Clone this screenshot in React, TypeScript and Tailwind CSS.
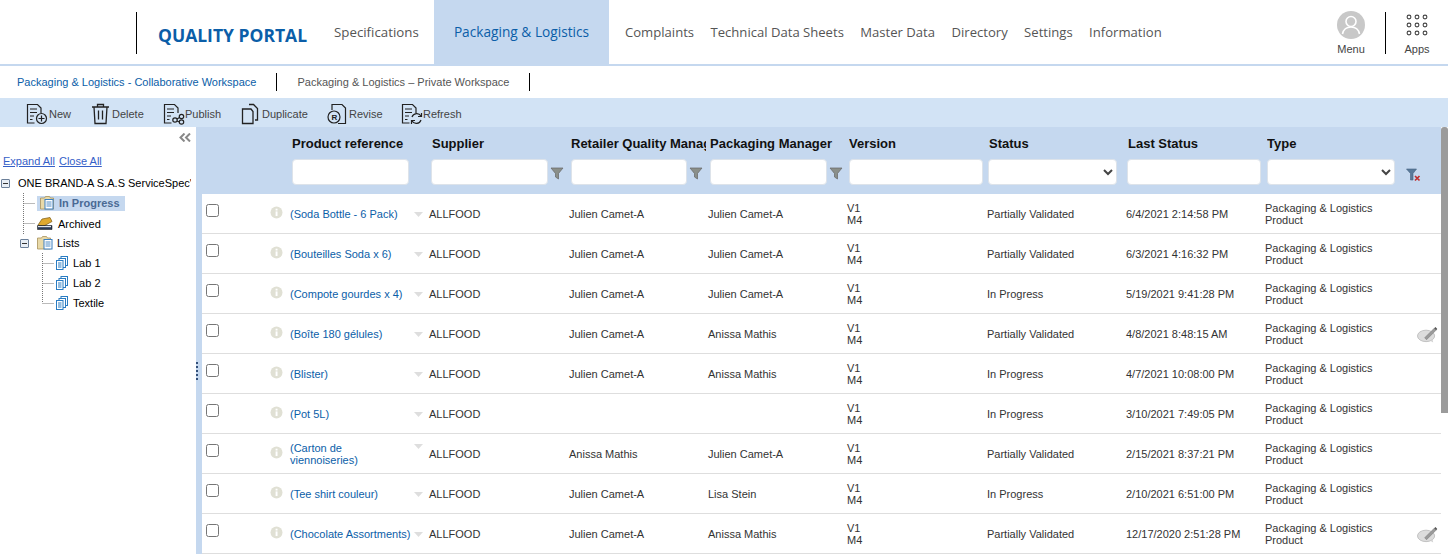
import type { ReactNode } from "react";

const navItems = ["Complaints", "Technical Data Sheets", "Master Data", "Directory", "Settings", "Information"];

const rows = [
  { ref: "(Soda Bottle - 6 Pack)", retailer: "Julien Camet-A", pack: "Julien Camet-A", status: "Partially Validated", date: "6/4/2021 2:14:58 PM" },
  { ref: "(Bouteilles Soda x 6)", retailer: "Julien Camet-A", pack: "Julien Camet-A", status: "Partially Validated", date: "6/3/2021 4:16:32 PM" },
  { ref: "(Compote gourdes x 4)", retailer: "Julien Camet-A", pack: "Julien Camet-A", status: "In Progress", date: "5/19/2021 9:41:28 PM" },
  { ref: "(Boîte 180 gélules)", retailer: "Julien Camet-A", pack: "Anissa Mathis", status: "Partially Validated", date: "4/8/2021 8:48:15 AM", note: true },
  { ref: "(Blister)", retailer: "Julien Camet-A", pack: "Anissa Mathis", status: "In Progress", date: "4/7/2021 10:08:00 PM" },
  { ref: "(Pot 5L)", retailer: "", pack: "", status: "In Progress", date: "3/10/2021 7:49:05 PM" },
  { ref: "(Carton de viennoiseries)", retailer: "Anissa Mathis", pack: "Julien Camet-A", status: "Partially Validated", date: "2/15/2021 8:37:21 PM" },
  { ref: "(Tee shirt couleur)", retailer: "Julien Camet-A", pack: "Lisa Stein", status: "In Progress", date: "2/10/2021 6:51:00 PM" },
  { ref: "(Chocolate Assortments)", retailer: "Julien Camet-A", pack: "Anissa Mathis", status: "Partially Validated", date: "12/17/2020 2:51:28 PM", note: true },
];

function Doc({ children }: { children?: ReactNode }) {
  return (
    <svg width="22" height="22" viewBox="0 0 22 22" fill="none" stroke="#222" strokeWidth="1.2" className="shrink-0">
      <path d="M1.500 17V1.500h10l3.500 3.500V10M1.500 17v3h7" />
      <path d="M4 6h7M4 9.500h7M4 13h4M4 16.500h2.500" />
      {children}
    </svg>
  );
}

function ToolButton({ icon, label, className }: { icon: ReactNode; label: string; className: string }) {
  return (
    <div className={`flex items-center ${className}`}>
      {icon}
      <span className="mt-[1px] text-[11px] text-[#444]">{label}</span>
    </div>
  );
}

function Funnel() {
  return (
    <svg width="14" height="14" viewBox="0 0 14 14" className="shrink-0">
      <path d="M1 2h12L8.500 7.500V13L5.500 11V7.500z" fill="#8a8f8a" stroke="#666" strokeWidth="0.7" />
    </svg>
  );
}

function HeadInput({ width, filter }: { width: string; filter?: boolean }) {
  return (
    <div className="flex items-center">
      <input className={`h-[26px] rounded-[4px] border border-[#dde3ea] bg-white ${width}`} />
      {filter && <span className="ml-[2px] mt-[2px]"><Funnel /></span>}
    </div>
  );
}

function HeadSelect({ width }: { width: string }) {
  return (
    <select className={`h-[26px] rounded-[4px] border border-[#dde3ea] bg-white text-[12px] text-[#444] ${width}`}>
      <option></option>
    </select>
  );
}

function HeadCell({ label, children, labelClass }: { label: string; children: ReactNode; labelClass?: string }) {
  return (
    <div className="min-w-0 pr-[4px]">
      <div className={`h-[32px] overflow-hidden whitespace-nowrap pt-[8px] text-[13px] leading-[17px] font-bold text-[#111] ${labelClass ?? ""}`}>{label}</div>
      {children}
    </div>
  );
}

function InfoIcon() {
  return (
    <svg width="13" height="13" viewBox="0 0 13 13" className="mb-[2px] shrink-0">
      <circle cx="6.500" cy="6.500" r="6" fill="#e0e0d4" />
      <rect x="5.600" y="5.400" width="1.900" height="4.600" fill="#fff" />
      <rect x="5.600" y="2.700" width="1.900" height="1.800" fill="#fff" />
    </svg>
  );
}

function NoteIcon() {
  return (
    <svg width="21" height="20" viewBox="0 0 22 20">
      <ellipse cx="9.500" cy="12" rx="9" ry="6" fill="#dcdcdc" stroke="#b5b5b5" strokeWidth="0.8" />
      <path d="M14 17l3 2-1-4z" fill="#d0d0d0" />
      <path d="M8 14l10-10 2 2-10 10z" fill="#9a9a9a" stroke="#777" strokeWidth="0.5" />
      <path d="M18 4l1.300-1.300 2 2L20 6z" fill="#555" />
    </svg>
  );
}

function StackIcon() {
  return (
    <svg width="12" height="14" viewBox="0 0 12 14" fill="#fff" stroke="#2a7cc2" strokeWidth="1" className="shrink-0">
      <rect x="5" y="0.500" width="6.500" height="9" />
      <rect x="3" y="2.500" width="6.500" height="9" />
      <rect x="0.500" y="4.500" width="6.500" height="9" />
      <path d="M2 7h3.500M2 9h3.500M2 11h3.500" stroke="#2a7cc2" />
    </svg>
  );
}

function FolderIcon({ stack }: { stack?: boolean }) {
  return (
    <svg width="16" height="14" viewBox="0 0 16 14" className="shrink-0">
      <path d="M0.500 2h4l1-1.500h4l1 1.500h3v11h-13z" fill="#e8d9a8" stroke="#a8925a" strokeWidth="0.8" />
      <rect x={stack ? 7 : 5} y="3.500" width="8" height="9.500" fill="#fff" stroke="#3b7fc0" />
      <path d={stack ? "M8.500 6h5M8.500 8h5M8.500 10h5" : "M6.500 6h5M6.500 8h5M6.500 10h5"} stroke="#3b7fc0" strokeWidth="0.9" />
    </svg>
  );
}

function Expander() {
  return (
    <span className="flex h-[9px] w-[9px] shrink-0 items-center justify-center rounded-[1px] border border-[#6b7f99] bg-[#e8eef5]">
      <span className="h-px w-[5px] bg-[#333]" />
    </span>
  );
}

function Branch({ last }: { last?: boolean }) {
  return (
    <svg width="14" height="21" className="shrink-0">
      <path d={`M0.500 0V${last ? 10 : 21}M0.500 10.500H12`} stroke="#777" strokeDasharray="1 1" fill="none" />
    </svg>
  );
}

function Tree() {
  return (
    <div className="text-[11px] leading-[20px] text-black">
      <div className="flex h-[20px] items-center whitespace-nowrap pl-[1px]">
        <Expander />
        <span className="ml-[8px] w-[173px] overflow-hidden">ONE BRAND-A S.A.S ServiceSpec'</span>
      </div>
      <div className="flex h-[20px] items-center overflow-hidden pl-[23px]">
        <Branch />
        <span className="flex h-[15px] w-[88px] items-center bg-[#c5d8ef] pl-[3px] font-bold text-[#4a6a94]">
          <FolderIcon />
          <span className="ml-[3px] leading-none">In Progress</span>
        </span>
      </div>
      <div className="flex h-[21px] items-center pl-[23px]">
        <Branch />
        <svg width="16" height="14" viewBox="0 0 16 14" className="shrink-0">
          <path d="M1 8l4-6 8-1.500 2 4-9 5z" fill="#e0a92f" stroke="#7a5a14" strokeWidth="0.7" />
          <path d="M0.500 8.500h14.500v4H0.500z" fill="#2b3a55" stroke="#111" strokeWidth="0.5" />
          <path d="M1 9h13v1.200H1z" fill="#dfe5ee" />
        </svg>
        <span className="ml-[5px]">Archived</span>
      </div>
      <div className="flex h-[19px] items-center pb-[1px] pl-[20px]">
        <Expander />
        <span className="ml-[8px]"><FolderIcon stack /></span>
        <span className="ml-[4px]">Lists</span>
      </div>
      {["Lab 1", "Lab 2", "Textile"].map((name, i) => (
        <div key={name} className="flex h-[20px] items-center overflow-hidden pl-[42px]">
          <Branch last={i === 2} />
          <StackIcon />
          <span className="ml-[5px]">{name}</span>
        </div>
      ))}
    </div>
  );
}

export default function App() {
  return (
    <div className="h-[554px] w-[1448px] overflow-hidden bg-white font-['Liberation_Sans',Arial,sans-serif]">
      {/* top bar */}
      <header className="flex h-[66px] items-start border-b-2 border-[#c5d8ef] font-['Open_Sans',sans-serif]">
        <div className="ml-[136px] mt-[12px] h-[42px] w-px bg-black" />
        <div className="ml-[21px] mt-[22px] w-[176px] text-[17.500px] leading-[26px] font-bold whitespace-nowrap text-[#0b5ea8]">QUALITY PORTAL</div>
        <div className="mt-[22px] w-[100px] text-[13.300px] leading-[20px] text-[#555]">Specifications</div>
        <div className="flex h-[64px] w-[175px] justify-center bg-[#c5d8ef] pt-[22px] text-[13.700px] leading-[20px] text-[#0b5ea8]">Packaging &amp; Logistics</div>
        <nav className="ml-[16px] mt-[22px] flex gap-[16.400px] text-[13.100px] leading-[20px] whitespace-nowrap text-[#555]">
          {navItems.map((item) => (
            <span key={item}>{item}</span>
          ))}
        </nav>
        <div className="ml-auto flex font-['Liberation_Sans',Arial,sans-serif] text-[11px] text-[#444]">
          <div className="mt-[11px] flex w-[40px] flex-col items-center">
            <svg width="28" height="28" viewBox="0 0 28 28">
              <circle cx="14" cy="14" r="14" fill="#c8c8c8" />
              <circle cx="14" cy="10.500" r="5" fill="none" stroke="#fff" strokeWidth="1.600" />
              <path d="M5.500 23c1-5 4-7 8.500-7s7.500 2 8.500 7" fill="none" stroke="#fff" strokeWidth="1.600" />
            </svg>
            <span className="mt-[3px] leading-[14px]">Menu</span>
          </div>
          <div className="ml-[14px] mt-[12px] h-[42px] w-px bg-black" />
          <div className="ml-[8px] mr-[8px] mt-[14px] flex w-[46px] flex-col items-center">
            <svg width="22" height="22" viewBox="0 0 22 22" fill="none" stroke="#444" strokeWidth="1.100">
              {[3, 11, 19].map((y) =>
                [3, 11, 19].map((x) => <circle key={`${x}-${y}`} cx={x} cy={y} r="1.900" />)
              )}
            </svg>
            <span className="mt-[6px] leading-[14px]">Apps</span>
          </div>
        </div>
      </header>

      {/* workspaces */}
      <div className="flex h-[32px] items-center text-[11px]">
        <span className="ml-[17px] text-[#0b5ea8]">Packaging &amp; Logistics - Collaborative Workspace</span>
        <span className="ml-[20px] h-[18px] w-px bg-black" />
        <span className="ml-[20px] text-[#555]">Packaging &amp; Logistics – Private Workspace</span>
        <span className="ml-[20px] h-[18px] w-px bg-black" />
      </div>

      {/* toolbar */}
      <div className="flex h-[29px] items-center bg-[#d2e3f5] pl-[26px] pt-[2px]">
        <ToolButton
          className="w-[65px] gap-[1px]"
          label="New"
          icon={
            <Doc>
              <circle cx="15.500" cy="15.500" r="5" />
              <path d="M15.500 12.500v6M12.500 15.500h6" />
            </Doc>
          }
        />
        <ToolButton
          className="w-[72px]"
          label="Delete"
          icon={
            <svg width="21" height="22" viewBox="0 0 21 22" fill="none" stroke="#222" strokeWidth="1.300" className="shrink-0">
              <path d="M1 4h17M6.500 4V1.500h6V4M3 4l1 16.500h11L16 4M7.500 7.500v9M11.500 7.500v9" />
            </svg>
          }
        />
        <ToolButton
          className="w-[78px]"
          label="Publish"
          icon={
            <Doc>
              <circle cx="12" cy="17" r="2.200" />
              <circle cx="18.500" cy="13.500" r="2.200" />
              <circle cx="18.500" cy="19" r="2.200" />
              <path d="M14 16l2.500-1.500M14 18l2.500 1" />
            </Doc>
          }
        />
        <ToolButton
          className="w-[86px]"
          label="Duplicate"
          icon={
            <svg width="21" height="22" viewBox="0 0 21 22" fill="none" stroke="#222" strokeWidth="1.300" className="shrink-0">
              <path d="M8 1.500h4.500l4 4V17H14M1.500 6H10l2 2.500V20.500H1.500z" />
            </svg>
          }
        />
        <ToolButton
          className="w-[74px]"
          label="Revise"
          icon={
            <svg width="22" height="22" viewBox="0 0 22 22" fill="none" stroke="#222" strokeWidth="1.200" className="shrink-0">
              <path d="M5 7V1.500h10l3.500 3.500v15.500H11" />
              <circle cx="7" cy="14" r="6" />
              <text x="4.500" y="17" fontSize="8" fontWeight="bold" fill="#222" stroke="none" fontFamily="Liberation Sans">R</text>
            </svg>
          }
        />
        <ToolButton
          className="w-[61px]"
          label="Refresh"
          icon={
            <Doc>
              <path d="M11 14a5 5 0 0 1 9-1M20 17a5 5 0 0 1-9 1" />
              <path d="M20.500 10v3.500H17M10.500 21v-3.500H14" />
            </Doc>
          }
        />
      </div>

      {/* body */}
      <div className="flex h-[427px]">
        <aside className="w-[196px] shrink-0 overflow-hidden">
          <div className="flex h-[15px] items-end justify-end pr-[5px]">
            <svg width="12" height="9" viewBox="0 0 12 9" fill="none" stroke="#888" strokeWidth="2">
              <path d="M5.500 0.500L1.500 4.500l4 4M11 0.500L7 4.500l4 4" />
            </svg>
          </div>
          <div className="mt-[11px] flex gap-[4px] pl-[3px] text-[11px] leading-[16px] text-[#3560c8] underline">
            <span>Expand All</span>
            <span>Close All</span>
          </div>
          <div className="mt-[4px]">
            <Tree />
          </div>
        </aside>

        <div className="flex h-full w-[6px] shrink-0 items-center justify-start bg-[#c5d8ef] pt-[60px]">
          <span className="h-[18px] w-[2px] border-l-2 border-dotted border-[#33507a]" />
        </div>

        <main className="min-w-0 flex-1">
          <div className="grid h-[67px] grid-cols-[90px_139px_140px_139px_139px_139px_139px_140px_1fr] bg-[#c5d8ef]">
            <div />
            <HeadCell label="Product reference"><HeadInput width="w-[117px]" /></HeadCell>
            <HeadCell label="Supplier" labelClass="pl-px"><HeadInput width="w-[117px]" filter /></HeadCell>
            <HeadCell label="Retailer Quality Manager"><HeadInput width="w-[116px]" filter /></HeadCell>
            <HeadCell label="Packaging Manager"><HeadInput width="w-[117px]" filter /></HeadCell>
            <HeadCell label="Version"><HeadInput width="w-[134px]" /></HeadCell>
            <HeadCell label="Status" labelClass="pl-px"><HeadSelect width="w-[129px]" /></HeadCell>
            <HeadCell label="Last Status" labelClass="pl-px"><HeadInput width="w-[134px]" /></HeadCell>
            <div className="flex items-start">
              <HeadCell label="Type"><HeadSelect width="w-[128px]" /></HeadCell>
              <svg width="16" height="14" viewBox="0 0 16 14" className="ml-[7px] mt-[41px] shrink-0">
                <path d="M0.500 1h10L7 5.500V12H4.500V5.500z" fill="#5a7a9a" stroke="#44617f" strokeWidth="0.6" />
                <path d="M9 8l4.500 4.500M13.500 8L9 12.500" stroke="#c03030" strokeWidth="1.700" />
              </svg>
            </div>
          </div>

          {rows.map((row) => (
            <div
              key={row.ref}
              className="grid h-[40px] grid-cols-[4px_64px_20px_124px_15px_140px_139px_139px_140px_139px_139px_1fr] items-center border-b border-[#dedede] text-[11px] leading-[12px] text-[#333]"
            >
              <div />
              <input type="checkbox" className="mb-[6px] h-[13px] w-[13px] justify-self-start" />
              <div className="flex justify-start"><InfoIcon /></div>
              <div className="w-[122px] text-[#0b5ea8]">{row.ref}</div>
              <div className={row.ref.startsWith("(Carton") ? "mb-[14px]" : "mt-[1px]"}>
                <svg width="9" height="5" viewBox="0 0 9 5"><path d="M0 0h9L4.500 5z" fill="#dedede" /></svg>
              </div>
              <div>ALLFOOD</div>
              <div>{row.retailer}</div>
              <div>{row.pack}</div>
              <div>V1<br />M4</div>
              <div>{row.status}</div>
              <div className="whitespace-nowrap">{row.date}</div>
              <div className="flex items-center justify-between">
                <span className="w-[120px]">Packaging &amp; Logistics Product</span>
                {row.note && <span className="mr-[3px] mt-[1px]"><NoteIcon /></span>}
              </div>
            </div>
          ))}
        </main>

        <div className="w-[7px] shrink-0 bg-white">
          <div className="h-[286px] w-[7px] rounded-t-[3px] bg-[#9b9b9b]" />
        </div>
      </div>
    </div>
  );
}
